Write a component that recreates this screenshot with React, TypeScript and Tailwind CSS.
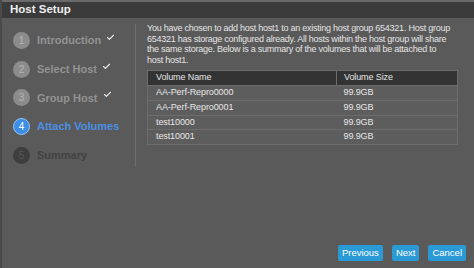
import { Check } from "lucide-react";

type Step = {
  num: number;
  label: string;
  state: "done" | "active" | "todo";
};

const steps: Step[] = [
  { num: 1, label: "Introduction", state: "done" },
  { num: 2, label: "Select Host", state: "done" },
  { num: 3, label: "Group Host", state: "done" },
  { num: 4, label: "Attach Volumes", state: "active" },
  { num: 5, label: "Summary", state: "todo" },
];

const volumes = [
  { name: "AA-Perf-Repro0000", size: "99.9GB" },
  { name: "AA-Perf-Repro0001", size: "99.9GB" },
  { name: "test10000", size: "99.9GB" },
  { name: "test10001", size: "99.9GB" },
];

function StepRow({ step }: { step: Step }) {
  const circle =
    step.state === "done"
      ? "bg-[#8c8c8c] text-[#b4b4b4]"
      : step.state === "active"
        ? "bg-[#3c8ee6] text-white border border-[#9cc4ef]"
        : "bg-[#3e3e3e] text-[#575757]";
  const text =
    step.state === "done"
      ? "text-[#929292]"
      : step.state === "active"
        ? "text-[#4a8fe4]"
        : "text-[#424242]";
  return (
    <div className="flex h-[28.75px] items-center">
      <span
        className={`flex h-[17px] w-[17px] items-center justify-center rounded-full text-[10px] ${circle}`}
      >
        {step.num}
      </span>
      <span className={`ml-[7px] text-[11px] font-bold ${text}`}>
        {step.label}
      </span>
      {step.state === "done" && (
        <Check className="mb-[6px] ml-[5px] text-[#e8e8e8]" size={9} strokeWidth={3} />
      )}
    </div>
  );
}

export default function App() {
  return (
    <div
      className="flex h-[268px] w-[474px] flex-col overflow-hidden border-l-2 border-l-[#4a4a4a] bg-[#5a5a5a]"
      style={{ fontFamily: '"Liberation Sans", Arial, sans-serif' }}
    >
      <div className="h-[2px] bg-[#6a6a6a]" />
      <div className="flex h-[16px] items-center bg-[#3b3b3b] pl-[8px] text-[11.5px] font-bold text-[#ededed]">
        Host Setup
      </div>
      <div className="flex flex-1 flex-col">
        <div className="flex pt-[5px]">
          <div className="w-[133px] pl-[11px] pt-[3px]">
            {steps.map((s) => (
              <StepRow key={s.num} step={s} />
            ))}
          </div>
          <div className="mt-[1px] h-[143px] w-px bg-[#6e6e6e]" />
          <div className="flex-1 pl-[11px] pr-[10px]">
            <p className="whitespace-nowrap text-[9px] leading-[10.5px] tracking-[-0.25px] text-[#e4e4e4]">
              You have chosen to add host host1 to an existing host group 654321. Host group
              <br />
              654321 has storage configured already. All hosts within the host group will share
              <br />
              the same storage. Below is a summary of the volumes that will be attached to
              <br />
              host host1.
            </p>
            <table className="mt-[5px] w-[311px] border border-[#6c6c6c] text-[9px] tracking-[-0.1px] text-[#e6e6e6]">
              <thead>
                <tr className="h-[15px] bg-[#333333] text-left">
                  <th className="w-[189px] border-r border-[#6c6c6c] pl-[8px] font-normal">
                    Volume Name
                  </th>
                  <th className="pl-[7px] font-normal">Volume Size</th>
                </tr>
              </thead>
              <tbody>
                {volumes.map((v) => (
                  <tr key={v.name} className="h-[14.75px] border-t border-[#6c6c6c] bg-[#5d5d5d]">
                    <td className="pl-[8px]">{v.name}</td>
                    <td className="pl-[7px]">{v.size}</td>
                  </tr>
                ))}
              </tbody>
            </table>
          </div>
        </div>
        <div className="mt-auto flex justify-end gap-[9px] pb-[7px] pr-[8px]">
          {["Previous", "Next", "Cancel"].map((label) => (
            <button
              key={label}
              type="button"
              className="h-[16px] rounded-[2px] bg-[#2a9ad6] px-[4px] text-[9.5px] leading-[16px] text-white"
            >
              {label}
            </button>
          ))}
        </div>
      </div>
    </div>
  );
}
